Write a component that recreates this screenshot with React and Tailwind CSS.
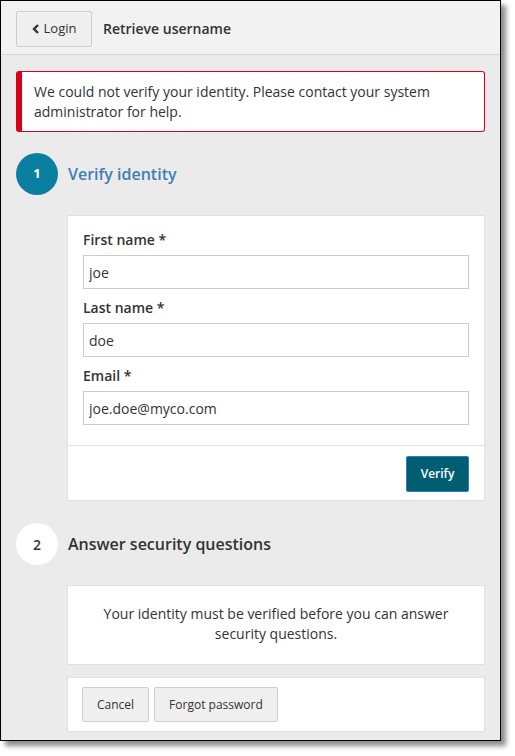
import React, { useState } from "react";

const Field = ({ label, value, onChange, first }) => (
  <div className={first ? "" : "mt-[9px]"}>
    <label className="block text-[14px] leading-[20px] font-semibold text-[#333]">{label}</label>
    <input
      value={value}
      onChange={(e) => onChange(e.target.value)}
      className="mt-[5px] block w-full h-[34px] border border-[#cccccc] bg-white px-[5px] text-[14px] text-[#333] outline-none"
    />
  </div>
);

const StepHeader = ({ num, title, active }) => (
  <div className="flex items-center">
    <div
      className={
        active
          ? "w-[42px] h-[42px] rounded-full bg-[#0b7fa0] text-white flex items-center justify-center text-[13px] font-bold"
          : "w-[42px] h-[42px] rounded-full bg-white text-[#333] flex items-center justify-center text-[14px] font-semibold"
      }
    >
      {num}
    </div>
    <h2
      className={
        active
          ? "ml-[10px] text-[16px] font-semibold text-[#3d80b3]"
          : "ml-[10px] text-[16px] font-semibold text-[#333]"
      }
    >
      {title}
    </h2>
  </div>
);

const App = () => {
  const [firstName, setFirstName] = useState("joe");
  const [lastName, setLastName] = useState("doe");
  const [email, setEmail] = useState("joe.doe@myco.com");

  return (
    <div className="w-[515px] h-[756px] bg-white" style={{ fontFamily: '"Open Sans", sans-serif' }}>
      <div className="w-[501px] h-[741px] border border-black bg-[#ebebeb] shadow-[5px_5px_5px_rgba(0,0,0,0.45)] overflow-hidden">
        {/* header */}
        <div className="h-[54px] bg-[#f2f2f2] border-b border-[#d6d6d6] flex items-start pt-[10px] px-[15px]">
          <button className="h-[36px] w-[76px] border border-[#cfcfcf] rounded-[2px] bg-[#efefef] flex items-center justify-center text-[13px] text-[#333]">
            <svg width="8" height="10" viewBox="0 0 8 10" className="mr-[4px]">
              <path d="M6 1 L2 5 L6 9" stroke="#333" strokeWidth="2.4" fill="none" />
            </svg>
            Login
          </button>
          <span className="ml-[11px] mt-[7px] text-[14px] font-semibold text-[#333]">Retrieve username</span>
        </div>

        <div className="pl-[15px] pr-[15px]">
          {/* alert */}
          <div className="mt-[16px] bg-white border border-[#d9001b] border-l-[6px] rounded-[3px] pl-[12px] pr-[10px] pt-[10px] pb-[9px] text-[14px] leading-[20px] text-[#333]">
            We could not verify your identity. Please contact your system administrator for help.
          </div>

          {/* step 1 */}
          <div className="mt-[21px]">
            <StepHeader num="1" title="Verify identity" active />
          </div>
          <div className="ml-[51px] mt-[20px] bg-white border border-[#e0e0e0]">
            <div className="px-[15px] pt-[14px] pb-[20px]">
              <Field label="First name *" value={firstName} onChange={setFirstName} first />
              <Field label="Last name *" value={lastName} onChange={setLastName} />
              <Field label="Email *" value={email} onChange={setEmail} />
            </div>
            <div className="border-t border-[#e3e3e3] flex justify-end px-[15px] pt-[10px] pb-[8px]">
              <button className="h-[36px] w-[63px] bg-[#005e71] border border-[#3a73c9] rounded-[2px] text-white text-[12px] font-semibold">
                Verify
              </button>
            </div>
          </div>

          {/* step 2 */}
          <div className="mt-[22px]">
            <StepHeader num="2" title="Answer security questions" />
          </div>
          <div className="ml-[51px] mt-[20px] bg-white border border-[#e0e0e0] px-[20px] pt-[18px] pb-[20px] text-center text-[14px] leading-[20px] text-[#333]">
            Your identity must be verified before you can answer security questions.
          </div>
          <div className="ml-[51px] mt-[12px] bg-white border border-[#e0e0e0] flex gap-[5px] px-[14px] py-[9px]">
            <button className="h-[35px] px-[14px] bg-[#efefef] border border-[#cfcfcf] rounded-[2px] text-[12px] text-[#333]">
              Cancel
            </button>
            <button className="h-[35px] px-[14px] bg-[#efefef] border border-[#cfcfcf] rounded-[2px] text-[12px] text-[#333]">
              Forgot password
            </button>
          </div>
        </div>
      </div>
    </div>
  );
};

export default App;
